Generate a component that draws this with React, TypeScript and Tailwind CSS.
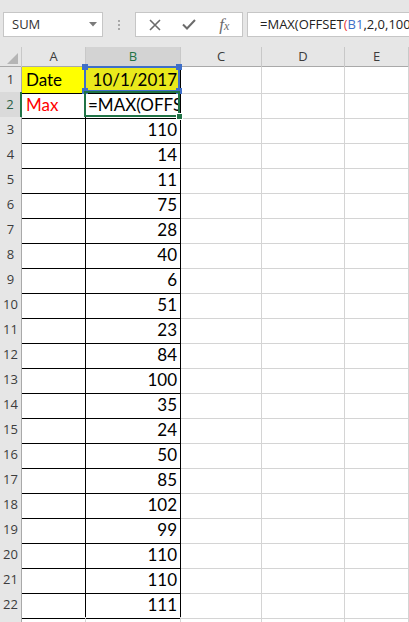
import React from 'react';

const values = [110, 14, 11, 75, 28, 40, 6, 51, 23, 84, 100, 35, 24, 50, 85, 102, 99, 110, 110, 111];

const cellFont = { fontFamily: 'Lato, "Liberation Sans", sans-serif' };
const uiFont = { fontFamily: '"Open Sans", "Noto Sans", sans-serif' };

function Toolbar() {
  return (
    <div className="flex h-[47px] items-start bg-[#e6e6e6] pt-[12px]" style={uiFont}>
      {/* name box */}
      <div className="ml-[3px] flex h-[25px] w-[100px] items-center justify-between border border-[#c6c6c6] bg-white pl-[8px] pr-[5px] text-[13px] text-[#333]">
        <span>SUM</span>
        <svg width="8" height="5" viewBox="0 0 8 5">
          <path d="M0 0 L8 0 L4 4.5 Z" fill="#7a7a7a" />
        </svg>
      </div>
      <div className="flex h-[25px] w-[32px] flex-col items-center justify-center gap-[2px]">
        <span className="h-[2px] w-[2px] bg-[#a8a8a8]" />
        <span className="h-[2px] w-[2px] bg-[#a8a8a8]" />
        <span className="h-[2px] w-[2px] bg-[#a8a8a8]" />
      </div>
      {/* cancel / enter / fx */}
      <div className="flex h-[25px] w-[108px] items-center border border-[#c6c6c6] bg-white">
        <div className="flex w-[36px] justify-center pl-[2px]">
          <svg width="12" height="12" viewBox="0 0 12 12">
            <path d="M1 1 L11 11 M11 1 L1 11" stroke="#6b6b6b" strokeWidth="1.6" />
          </svg>
        </div>
        <div className="flex w-[36px] justify-center">
          <svg width="14" height="11" viewBox="0 0 14 11">
            <path d="M1 5.5 L5 9.5 L13 1" stroke="#6b6b6b" strokeWidth="2" fill="none" />
          </svg>
        </div>
        <div
          className="flex w-[36px] items-baseline justify-center text-[17px] italic leading-none text-[#6b6b6b]"
          style={{ fontFamily: '"Liberation Serif", "DejaVu Serif", serif' }}
        >
          f<span className="text-[12px]">x</span>
        </div>
      </div>
      {/* formula input */}
      <div className="ml-[4px] flex h-[25px] flex-1 items-center overflow-hidden whitespace-nowrap border border-r-0 border-[#c6c6c6] bg-white pl-[12px] text-[13px] text-[#222]">
        <span>=MAX(OFFSET</span>
        <span className="text-[#e8383d]">(</span>
        <span className="text-[#3f6fc8]">B1</span>
        <span>,2,0,100,1))</span>
      </div>
    </div>
  );
}

const cols = ['A', 'B', 'C', 'D', 'E'];

function HeaderRow() {
  return (
    <div className="grid h-[20px] grid-cols-[22px_64px_95px_81px_83px_64px] border-b border-[#a9a9a9] bg-[#e6e6e6] text-[13px] text-[#3c3c3c]" style={uiFont}>
      <div className="relative border-r border-[#c8c8c8]">
        <svg className="absolute bottom-[3px] right-[3px]" width="11" height="11" viewBox="0 0 11 11">
          <path d="M11 0 L11 11 L0 11 Z" fill="#b5b5b5" />
        </svg>
      </div>
      {cols.map((c) => (
        <div
          key={c}
          className={
            c === 'B'
              ? 'relative flex items-center justify-center border-r border-[#c8c8c8] bg-[#d3d3d3] text-[#217346]'
              : 'flex items-center justify-center border-r border-[#c8c8c8]'
          }
        >
          {c}
          {c === 'B' && <span className="absolute -bottom-[1px] left-0 right-0 h-[2px] bg-[#217346]" />}
        </div>
      ))}
      <div />
    </div>
  );
}

function Row({ n }: { n: number }) {
  const boxed = n <= 22;
  const active = n === 2;
  let a: React.ReactNode = null;
  let b: React.ReactNode = null;
  let aBg = '';
  let bBg = '';
  if (n === 1) {
    a = <span className="pl-[4px]">Date</span>;
    b = <span className="w-full text-right pr-[3px]">10/1/2017</span>;
    aBg = 'bg-[#ffff00]';
    bBg = 'bg-[#e9e91c]';
  } else if (n === 2) {
    a = <span className="pl-[4px] text-[#ff0000]">Max</span>;
    b = <span className="whitespace-nowrap pl-[2px]">=MAX(OFFSET(B1,2,0,100,1))</span>;
  } else if (n <= 22) {
    b = <span className="w-full pr-[3px] text-right">{values[n - 3]}</span>;
  }
  const edge = boxed ? 'border-black' : 'border-[#d4d4d4]';
  return (
    <div className="grid h-[25px] grid-cols-[22px_64px_95px_81px_83px_64px]">
      <div
        className={
          active
            ? 'flex items-center justify-center border-b border-r-2 border-b-[#c8c8c8] border-r-[#217346] bg-[#dadada] text-[13px] text-[#2b5f45]'
            : 'flex items-center justify-center border-b border-r border-b-[#d0d0d0] border-r-[#a9a9a9] bg-[#e6e6e6] text-[13px] text-[#3c3c3c]'
        }
        style={uiFont}
      >
        {n <= 22 ? n : ''}
      </div>
      <div className={`flex items-center overflow-hidden border-b border-r text-[17px] text-black ${edge} ${aBg}`} style={cellFont}>
        {a}
      </div>
      <div className={`relative flex items-center border-b border-r text-[17px] text-black ${edge} ${bBg}`} style={cellFont}>
        <div className="flex w-full items-center overflow-hidden">{b}</div>
        {n === 1 && (
          <div className="pointer-events-none absolute -left-[2px] -top-[1px] z-10 h-[26px] w-[96px] border-2 border-[#3f6fc8]">
            <span className="absolute -left-[4px] -top-[4px] h-[6px] w-[6px] bg-[#3f6fc8]" />
            <span className="absolute -right-[4px] -top-[4px] h-[6px] w-[6px] bg-[#3f6fc8]" />
            <span className="absolute -bottom-[4px] -left-[4px] h-[6px] w-[6px] bg-[#3f6fc8]" />
            <span className="absolute -bottom-[4px] -right-[4px] h-[6px] w-[6px] bg-[#3f6fc8]" />
          </div>
        )}
        {n === 2 && (
          <div className="pointer-events-none absolute -left-[2px] -top-[1px] z-10 h-[26px] w-[96px] border-2 border-[#217346]">
            <span className="absolute -bottom-[5px] -right-[5px] h-[7px] w-[7px] border border-white bg-[#217346]" />
          </div>
        )}
      </div>
      <div className="border-b border-r border-[#d4d4d4]" />
      <div className="border-b border-r border-[#d4d4d4]" />
      <div className="border-b border-r border-[#d4d4d4]" />
    </div>
  );
}

export default function App() {
  const rows = Array.from({ length: 23 }, (_, i) => i + 1);
  return (
    <div className="h-[622px] w-[409px] overflow-hidden bg-white">
      <Toolbar />
      <HeaderRow />
      {rows.map((n) => (
        <Row key={n} n={n} />
      ))}
    </div>
  );
}
